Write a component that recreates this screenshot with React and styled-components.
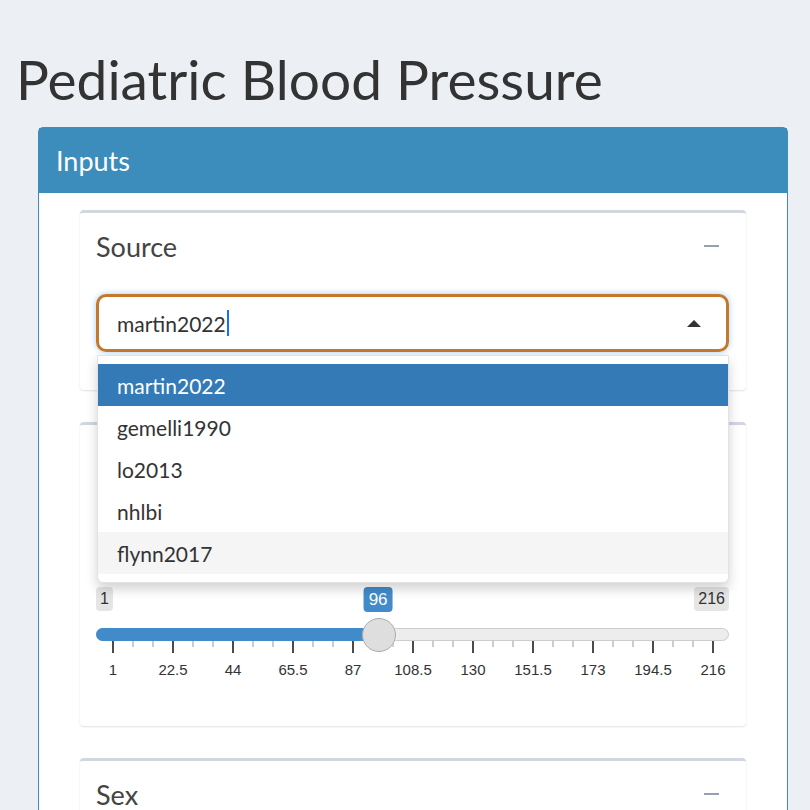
import React from "react";
import styled, { createGlobalStyle } from "styled-components";

const GlobalStyle = createGlobalStyle`
  html, body {
    margin: 0;
    padding: 0;
  }
  body {
    background: #ecf0f5;
    font-family: "Source Sans Pro", Lato, "Liberation Sans", sans-serif;
    color: #333;
  }
`;

const sources = ["martin2022", "gemelli1990", "lo2013", "nhlbi", "flynn2017"];

const MIN = 1;
const MAX = 216;
const VALUE = 96;
const GRID_W = 600;
const gridLabels = ["1", "22.5", "44", "65.5", "87", "108.5", "130", "151.5", "173", "194.5", "216"];

export default function App() {
  const pos = ((VALUE - MIN) / (MAX - MIN)) * GRID_W;

  return (
    <Page>
      <GlobalStyle />
      <Title>Pediatric Blood Pressure</Title>
      <Box>
        <BoxHeader>
          <BoxTitle>Inputs</BoxTitle>
        </BoxHeader>
        <BoxBody>
          <Card>
            <CardHeader>
              <CardTitle>Source</CardTitle>
              <Minus />
            </CardHeader>
            <CardBody pb={38}>
              <SelectWrap>
                <Select>
                  <SelectText>martin2022</SelectText>
                  <Caret />
                  <Arrow />
                </Select>
                <Dropdown>
                  {sources.map((s, i) => (
                    <Option key={s} selected={i === 0} hover={i === 4}>
                      {s}
                    </Option>
                  ))}
                </Dropdown>
              </SelectWrap>
            </CardBody>
          </Card>

          <Card>
            {/* header and field label sit under the open dropdown */}
            <CardHeader />
            <CardBody pb={48}>
              <LabelSpace />
              <Slider>
                <LabelRow>
                  <MinMax side="left">1</MinMax>
                  <Single style={{ left: 17 + pos }}>{VALUE}</Single>
                  <MinMax side="right">216</MinMax>
                </LabelRow>
                <Track>
                  <Bar style={{ width: 17 + pos }} />
                  <Handle style={{ left: 17 + pos }} />
                </Track>
                <Ticks width="634" height="14" viewBox="0 0 634 14">
                  {gridLabels.map((_, i) => {
                    const x = 17 + i * 60;
                    return (
                      <g key={i}>
                        <rect x={x - 0.75} y="0" width="1.5" height="12" fill="#111" />
                        {i < 10 && (
                          <>
                            <rect x={x + 19.5} y="0" width="1" height="6" fill="#999" />
                            <rect x={x + 39.5} y="0" width="1" height="6" fill="#999" />
                          </>
                        )}
                      </g>
                    );
                  })}
                </Ticks>
                <GridLabels>
                  {gridLabels.map((l) => (
                    <GridLabel key={l}>{l}</GridLabel>
                  ))}
                </GridLabels>
              </Slider>
            </CardBody>
          </Card>

          <Card>
            <CardHeader>
              <CardTitle>Sex</CardTitle>
              <Minus />
            </CardHeader>
            <CardBody pb={38}>
              <LabelSpace />
            </CardBody>
          </Card>
        </BoxBody>
      </Box>
    </Page>
  );
}

const Page = styled.div`
  width: 810px;
  height: 810px;
  overflow: hidden;
`;

const Title = styled.h1`
  margin: 0;
  padding: 52px 0 0 16px;
  height: 127px;
  box-sizing: border-box;
  font-size: 55px;
  font-weight: 400;
  line-height: 1;
  color: #333;
`;

const Box = styled.div`
  margin-left: 38px;
  width: 750px;
  border: 1px solid #3c8dbc;
  border-radius: 5px 5px 0 0;
  background: #fff;
  box-sizing: border-box;
`;

const BoxHeader = styled.div`
  height: 65px;
  background: #3c8dbc;
  display: flex;
  align-items: center;
  padding-left: 17px;
`;

const BoxTitle = styled.div`
  color: #fff;
  font-size: 27px;
`;

const BoxBody = styled.div`
  padding: 17px 41px 40px;
  display: flex;
  flex-direction: column;
  gap: 32px;
`;

const Card = styled.div`
  border-top: 3px solid #d2d6de;
  border-radius: 4px;
  background: #fff;
  box-shadow: 0 1px 2px rgba(0, 0, 0, 0.12);
`;

const CardHeader = styled.div`
  height: 66px;
  display: flex;
  align-items: center;
  justify-content: space-between;
  padding: 0 27px 0 16px;
`;

const CardTitle = styled.div`
  font-size: 27px;
  color: #444;
`;

const Minus = styled.span`
  width: 15px;
  height: 2px;
  background: #97a0b3;
`;

const CardBody = styled.div`
  padding: 15px 17px ${(p) => p.pb}px 16px;
`;

const LabelSpace = styled.div`
  height: 82px;
`;

const SelectWrap = styled.div`
  position: relative;
`;

const Select = styled.div`
  height: 58px;
  box-sizing: border-box;
  border: 3px solid #c5772c;
  border-radius: 10px;
  box-shadow: 0 0 6px rgba(102, 175, 233, 0.6);
  display: flex;
  align-items: center;
  padding: 0 25px 0 18px;
`;

const SelectText = styled.span`
  font-size: 21px;
  color: #333;
`;

const Caret = styled.span`
  width: 2px;
  height: 26px;
  margin-left: 1px;
  background: #1a6ef5;
`;

const Arrow = styled.span`
  margin-left: auto;
  width: 0;
  height: 0;
  border-left: 7.5px solid transparent;
  border-right: 7.5px solid transparent;
  border-bottom: 7px solid #333;
`;

const Dropdown = styled.div`
  position: absolute;
  top: 61px;
  left: 1px;
  right: 0;
  z-index: 10;
  background: #fff;
  border: 1px solid #e2e2e2;
  border-radius: 0 0 6px 6px;
  box-shadow: 0 6px 12px rgba(0, 0, 0, 0.175);
  padding: 8px 0;
`;

const Option = styled.div`
  height: 42px;
  display: flex;
  align-items: center;
  padding-left: 19px;
  font-size: 21px;
  color: ${(p) => (p.selected ? "#fff" : "#333")};
  background: ${(p) => (p.selected ? "#337ab7" : p.hover ? "#f5f5f5" : "#fff")};
`;

const Slider = styled.div`
  position: relative;
  font-family: "Liberation Sans", Arial, sans-serif;
`;

const LabelRow = styled.div`
  position: relative;
  height: 25px;
  margin-bottom: 15px;
`;

const MinMax = styled.span`
  position: absolute;
  top: -1px;
  ${(p) => (p.side === "left" ? "left: 0;" : "right: 0;")}
  padding: 2px 4px;
  font-size: 16px;
  line-height: 20px;
  color: #333;
  background: rgba(0, 0, 0, 0.1);
  border-radius: 4px;
`;

const Single = styled.span`
  position: absolute;
  top: -1px;
  transform: translateX(-50%);
  padding: 2px 5px;
  font-size: 17px;
  line-height: 21px;
  color: #fff;
  background: #428bca;
  border-radius: 4px;
`;

const Track = styled.div`
  position: relative;
  height: 13px;
  box-sizing: border-box;
  background: #ededed;
  border: 1px solid #cccccc;
  border-radius: 8px;
`;

const Bar = styled.div`
  position: absolute;
  left: -1px;
  top: -1px;
  bottom: -1px;
  background: #428bca;
  border-radius: 8px 0 0 8px;
`;

const Handle = styled.div`
  position: absolute;
  top: 50%;
  width: 34px;
  height: 34px;
  box-sizing: border-box;
  transform: translate(-50%, -50%);
  border-radius: 50%;
  background: #dedede;
  border: 1.5px solid #ababab;
  box-shadow: 1px 1px 3px rgba(255, 255, 255, 0.3);
`;

const Ticks = styled.svg`
  display: block;
`;

const GridLabels = styled.div`
  display: flex;
  margin-left: -13px;
  margin-top: 6px;
`;

const GridLabel = styled.span`
  width: 60px;
  flex-shrink: 0;
  text-align: center;
  font-size: 15px;
  color: #333;
`;
